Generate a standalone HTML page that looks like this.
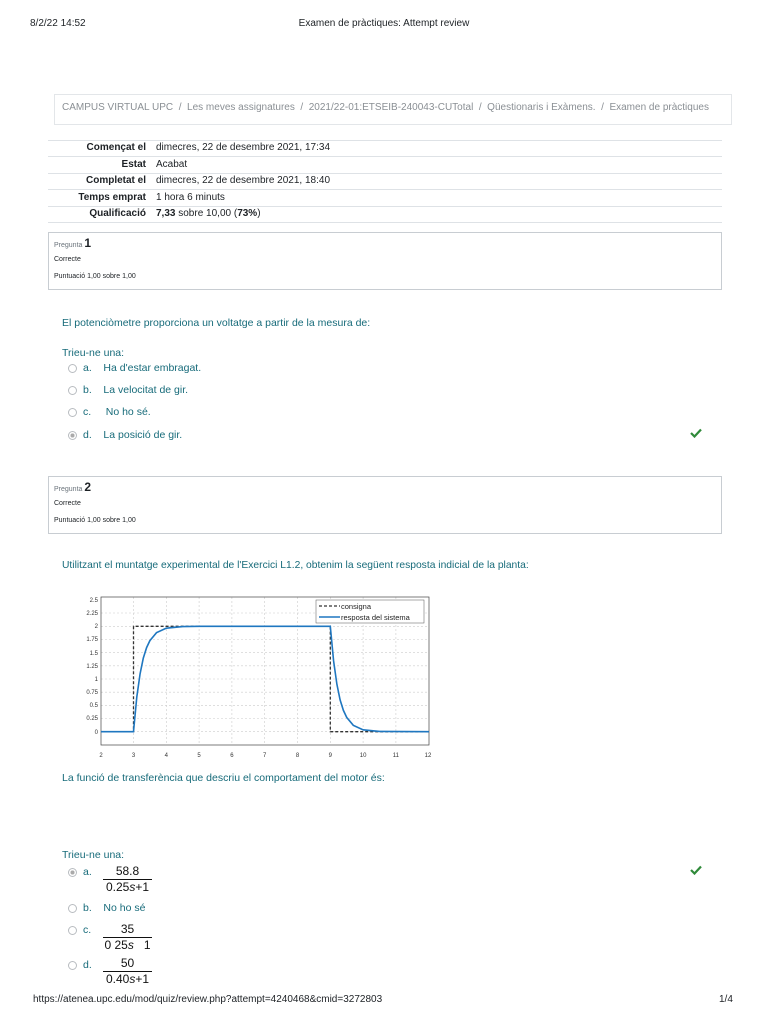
<!DOCTYPE html>
<html><head><meta charset="utf-8"><style>
body{margin:0;width:768px;height:1024px;background:#fff;font-family:"Liberation Sans","DejaVu Sans",sans-serif;color:#1d2125;position:relative;overflow:hidden}
.a{position:absolute;white-space:nowrap}
.t{color:#176b7a}
.q{font-size:10.5px}
.hr{position:absolute;left:48px;width:674px;height:1px;background:#dee2e6}
.box{position:absolute;left:48px;width:672px;border:1px solid #c8cdd2}
.rad{position:absolute;width:7px;height:7px;border:1px solid #b8bcc0;border-radius:50%;background:#fff}
.frac{position:absolute;text-align:center;font-size:12px;color:#111}
.frac div:first-child{border-bottom:1px solid #111;padding-bottom:1px}
</style></head><body>
<div class="a" style="left:30px;top:18px;font-size:10px">8/2/22 14:52</div>
<div class="a" style="left:0;width:768px;text-align:center;top:18px;font-size:10px">Examen de pràctiques: Attempt review</div>

<div class="a" style="left:54px;top:94px;width:676px;height:29px;border:1px solid #e3e6e9"></div>
<div class="a" style="left:62px;top:102px;font-size:10px;color:#8a8f94">CAMPUS VIRTUAL UPC &nbsp;/&nbsp; Les meves assignatures &nbsp;/&nbsp; 2021/22-01:ETSEIB-240043-CUTotal &nbsp;/&nbsp; Qüestionaris i Exàmens. &nbsp;/&nbsp; Examen de pràctiques</div>

<div class="hr" style="top:140px"></div><div class="hr" style="top:156px"></div><div class="hr" style="top:173px"></div><div class="hr" style="top:189px"></div><div class="hr" style="top:206px"></div><div class="hr" style="top:222px"></div>
<div class="a" style="right:622px;top:142px;font-size:10px;font-weight:bold;text-align:right">Començat el</div>
<div class="a" style="left:156px;top:142px;font-size:10px">dimecres, 22 de desembre 2021, 17:34</div>
<div class="a" style="right:622px;top:159px;font-size:10px;font-weight:bold">Estat</div>
<div class="a" style="left:156px;top:159px;font-size:10px">Acabat</div>
<div class="a" style="right:622px;top:175px;font-size:10px;font-weight:bold">Completat el</div>
<div class="a" style="left:156px;top:175px;font-size:10px">dimecres, 22 de desembre 2021, 18:40</div>
<div class="a" style="right:622px;top:192px;font-size:10px;font-weight:bold">Temps emprat</div>
<div class="a" style="left:156px;top:192px;font-size:10px">1 hora 6 minuts</div>
<div class="a" style="right:622px;top:208px;font-size:10px;font-weight:bold">Qualificació</div>
<div class="a" style="left:156px;top:208px;font-size:10px"><b>7,33</b> sobre 10,00 (<b>73%</b>)</div>

<div class="box" style="top:232px;height:56px"></div>
<div class="a" style="left:54px;top:236px;font-size:7px;color:#6a737b">Pregunta <span style="font-size:12px;font-weight:bold;color:#1d2125">1</span></div>
<div class="a" style="left:54px;top:256px;font-size:7px">Correcte</div>
<div class="a" style="left:54px;top:273px;font-size:7px">Puntuació 1,00 sobre 1,00</div>

<div class="a t q" style="left:62px;top:317px">El potenciòmetre proporciona un voltatge a partir de la mesura de:</div>
<div class="a t q" style="left:62px;top:347px">Trieu-ne una:</div>
<div class="rad" style="left:68px;top:364px"></div><div class="a t q" style="left:83px;top:362px">a.&nbsp;&nbsp;&nbsp; Ha d'estar embragat.</div>
<div class="rad" style="left:68px;top:386px"></div><div class="a t q" style="left:83px;top:384px">b.&nbsp;&nbsp;&nbsp; La velocitat de gir.</div>
<div class="rad" style="left:68px;top:408px"></div><div class="a t q" style="left:83px;top:406px">c.&nbsp;&nbsp;&nbsp;&nbsp; No ho sé.</div>
<div class="rad" style="left:68px;top:431px;background:radial-gradient(#aaa 40%,#fff 45%)"></div><div class="a t q" style="left:83px;top:429px">d.&nbsp;&nbsp;&nbsp; La posició de gir.</div>
<svg class="a" style="left:690px;top:428px" width="12" height="10"><path d="M1 5 L4.5 8.5 L11 1.5" stroke="#2f8a3a" stroke-width="2.2" fill="none"/></svg>

<div class="box" style="top:476px;height:56px"></div>
<div class="a" style="left:54px;top:480px;font-size:7px;color:#6a737b">Pregunta <span style="font-size:12px;font-weight:bold;color:#1d2125">2</span></div>
<div class="a" style="left:54px;top:500px;font-size:7px">Correcte</div>
<div class="a" style="left:54px;top:517px;font-size:7px">Puntuació 1,00 sobre 1,00</div>

<div class="a t" style="left:62px;top:560px;font-size:10.3px">Utilitzant el muntatge experimental de l'Exercici L1.2, obtenim la següent resposta indicial de la planta:</div>

<svg class="a" style="left:0;top:0" width="768" height="1024">
<g stroke="#ccc" stroke-width="0.6" stroke-dasharray="2,2">
<line x1="133.5" y1="597" x2="133.5" y2="745"/><line x1="166.3" y1="597" x2="166.3" y2="745"/><line x1="199.1" y1="597" x2="199.1" y2="745"/><line x1="231.9" y1="597" x2="231.9" y2="745"/><line x1="264.7" y1="597" x2="264.7" y2="745"/><line x1="297.5" y1="597" x2="297.5" y2="745"/><line x1="330.3" y1="597" x2="330.3" y2="745"/><line x1="363.1" y1="597" x2="363.1" y2="745"/><line x1="395.9" y1="597" x2="395.9" y2="745"/>
<line x1="101" y1="613" x2="429" y2="613"/><line x1="101" y1="626.3" x2="429" y2="626.3"/><line x1="101" y1="639.5" x2="429" y2="639.5"/><line x1="101" y1="652.7" x2="429" y2="652.7"/><line x1="101" y1="665.8" x2="429" y2="665.8"/><line x1="101" y1="679" x2="429" y2="679"/><line x1="101" y1="692.2" x2="429" y2="692.2"/><line x1="101" y1="705.4" x2="429" y2="705.4"/><line x1="101" y1="718.5" x2="429" y2="718.5"/><line x1="101" y1="731.7" x2="429" y2="731.7"/>
</g>
<rect x="101" y="597" width="328" height="148" fill="none" stroke="#444" stroke-width="0.7"/>
<g font-size="6" fill="#333" text-anchor="end" font-family="Liberation Sans">
<text x="98" y="602">2.5</text><text x="98" y="615">2.25</text><text x="98" y="628">2</text><text x="98" y="641">1.75</text><text x="98" y="655">1.5</text><text x="98" y="668">1.25</text><text x="98" y="681">1</text><text x="98" y="694">0.75</text><text x="98" y="707">0.5</text><text x="98" y="720">0.25</text><text x="98" y="734">0</text>
</g>
<g font-size="6" fill="#333" text-anchor="middle" font-family="Liberation Sans">
<text x="101" y="757">2</text><text x="133.5" y="757">3</text><text x="166.3" y="757">4</text><text x="199.1" y="757">5</text><text x="231.9" y="757">6</text><text x="264.7" y="757">7</text><text x="297.5" y="757">8</text><text x="330.3" y="757">9</text><text x="363.1" y="757">10</text><text x="395.9" y="757">11</text><text x="428" y="757">12</text>
</g>
<path d="M101 731.7 L133.5 731.7 L133.5 626.3 L330.3 626.3 L330.3 731.7 L429 731.7" stroke="#333" stroke-width="1.3" fill="none" stroke-dasharray="3,2"/>
<path d="M101 731.7 L133.5 731.7 L136.8 697 L140.1 673.7 L143.3 658.1 L146.6 647.6 L149.9 640.6 L156.5 632.7 L166.3 628.2 L182.7 626.6 L200 626.3 L330.3 626.3 L333.6 661 L336.9 684.3 L340.1 699.9 L343.4 710.4 L346.7 717.4 L353.3 725.3 L363.1 729.8 L379.5 731.4 L429 731.7" stroke="#1f77c0" stroke-width="1.6" fill="none"/>
<rect x="316" y="600" width="108" height="23" fill="#fff" stroke="#555" stroke-width="0.5"/>
<line x1="319" y1="606" x2="340" y2="606" stroke="#333" stroke-width="1.2" stroke-dasharray="3,2"/>
<line x1="319" y1="617" x2="340" y2="617" stroke="#1f77c0" stroke-width="1.5"/>
<text x="341" y="609" font-size="7.5" fill="#222" font-family="Liberation Sans">consigna</text>
<text x="341" y="620" font-size="7.5" fill="#222" font-family="Liberation Sans">resposta del sistema</text>
</svg>

<div class="a t q" style="left:62px;top:772px">La funció de transferència que descriu el comportament del motor és:</div>
<div class="a t q" style="left:62px;top:849px">Trieu-ne una:</div>
<div class="rad" style="left:68px;top:868px;background:radial-gradient(#aaa 40%,#fff 45%)"></div><div class="a t q" style="left:83px;top:866px">a.</div>
<div class="frac" style="left:103px;top:864px;width:49px"><div>58.8</div><div>0.25<i>s</i>+1</div></div>
<svg class="a" style="left:690px;top:865px" width="12" height="10"><path d="M1 5 L4.5 8.5 L11 1.5" stroke="#2f8a3a" stroke-width="2.2" fill="none"/></svg>
<div class="rad" style="left:68px;top:904px"></div><div class="a t q" style="left:83px;top:902px">b.&nbsp;&nbsp;&nbsp; No ho sé</div>
<div class="rad" style="left:68px;top:926px"></div><div class="a t q" style="left:83px;top:924px">c.</div>
<div class="frac" style="left:103px;top:922px;width:49px"><div>35</div><div>0&nbsp;25<i>s</i>&nbsp;&nbsp;&nbsp;1</div></div>
<div class="rad" style="left:68px;top:961px"></div><div class="a t q" style="left:83px;top:959px">d.</div>
<div class="frac" style="left:103px;top:956px;width:49px"><div>50</div><div>0.40<i>s</i>+1</div></div>

<div class="a" style="left:33px;top:994px;font-size:10px">https://atenea.upc.edu/mod/quiz/review.php?attempt=4240468&amp;cmid=3272803</div>
<div class="a" style="left:719px;top:994px;font-size:10px">1/4</div>
</body></html>
